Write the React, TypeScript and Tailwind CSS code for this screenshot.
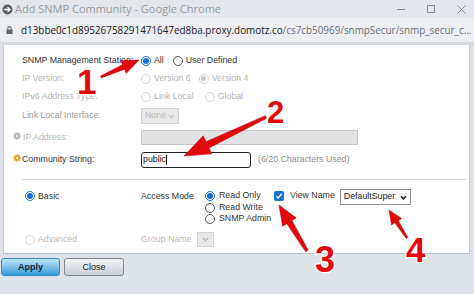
import React from 'react';

type Pt = [number, number];

function arrowPoints(tail: Pt, tip: Pt, tw: number, sw: number, hw: number, hl: number) {
  const dx = tip[0] - tail[0];
  const dy = tip[1] - tail[1];
  const len = Math.hypot(dx, dy);
  const ux = dx / len;
  const uy = dy / len;
  const nx = -uy;
  const ny = ux;
  const neck: Pt = [tip[0] - ux * hl, tip[1] - uy * hl];
  const p = (b: Pt, w: number, s: number) => `${b[0] + nx * w * s},${b[1] + ny * w * s}`;
  return [
    p(tail, tw / 2, 1),
    p(neck, sw / 2, 1),
    p(neck, hw / 2, 1),
    `${tip[0]},${tip[1]}`,
    p(neck, hw / 2, -1),
    p(neck, sw / 2, -1),
    p(tail, tw / 2, -1),
  ].join(' ');
}

function Radio({ checked = false, disabled = false }: { checked?: boolean; disabled?: boolean }) {
  if (checked && !disabled) {
    return (
      <span className="inline-flex w-[10px] h-[10px] rounded-full border border-[#1a6fd6] bg-white items-center justify-center shrink-0">
        <span className="w-[6px] h-[6px] rounded-full bg-[#1a6fd6]" />
      </span>
    );
  }
  if (checked && disabled) {
    return (
      <span className="inline-flex w-[10px] h-[10px] rounded-full border border-[#d0d0d0] bg-white items-center justify-center shrink-0">
        <span className="w-[5px] h-[5px] rounded-full bg-[#c4c4c4]" />
      </span>
    );
  }
  return (
    <span
      className={
        disabled
          ? 'inline-block w-[10px] h-[10px] rounded-full border border-[#d6d6d6] bg-white shrink-0'
          : 'inline-block w-[10px] h-[10px] rounded-full border border-[#555] bg-white shrink-0'
      }
    />
  );
}

function Gear({ color }: { color: string }) {
  return (
    <svg width="8" height="8" viewBox="0 0 16 16" className="absolute left-[-9px] top-[1px]">
      <g fill={color}>
        <circle cx="8" cy="8" r="5" />
        <rect x="6.5" y="0.5" width="3" height="15" />
        <rect x="0.5" y="6.5" width="15" height="3" />
        <rect x="6.5" y="0.5" width="3" height="15" transform="rotate(45 8 8)" />
        <rect x="6.5" y="0.5" width="3" height="15" transform="rotate(-45 8 8)" />
      </g>
      <circle cx="8" cy="8" r="2.2" fill="#fff" />
    </svg>
  );
}

function Chevron({ color = '#999', w = 1.2 }: { color?: string; w?: number }) {
  return (
    <svg width="7" height="5" viewBox="0 0 8 5">
      <path d="M1 1 L4 4 L7 1" fill="none" stroke={color} strokeWidth={w} />
    </svg>
  );
}

export default function App() {
  const label = 'w-[119px] shrink-0';
  return (
    <div
      className="relative w-[474px] h-[294px] overflow-hidden bg-[#dde3e9] text-[8.8px] text-[#333]"
      style={{ fontFamily: '"Liberation Sans", Arial, sans-serif' }}
    >
      {/* title bar */}
      <div
        className="h-[18px] bg-[#e3e6ea] flex items-center pl-[2px] pr-[8px] text-[11px] text-[#989ca2]"
        style={{ fontFamily: '"Open Sans", "Noto Sans", sans-serif' }}
      >
        <svg width="11" height="11" viewBox="0 0 12 12" className="mr-[2px]">
          <circle cx="6" cy="6" r="5.5" fill="#5f6368" />
          <path d="M2.5 6 H8.5 M6 3.5 L8.8 6 L6 8.5" stroke="#fff" strokeWidth="1.4" fill="none" />
        </svg>
        <span>Add SNMP Community - Google Chrome</span>
        <div className="ml-auto flex items-center gap-[22px]">
          <span className="block w-[8px] h-px bg-[#8a8f96]" />
          <span className="block w-[8px] h-[8px] border border-[#8a8f96]" />
          <svg width="9" height="9" viewBox="0 0 9 9">
            <path d="M0.5 0.5 L8.5 8.5 M8.5 0.5 L0.5 8.5" stroke="#8a8f96" strokeWidth="1" />
          </svg>
        </div>
      </div>
      {/* address bar */}
      <div
        className="h-[27px] bg-[#eceef1] flex items-center pl-[6px] text-[9.9px] border-b-[3px] border-[#d5d9de]"
        style={{ fontFamily: '"Open Sans", "Noto Sans", sans-serif' }}
      >
        <svg width="7" height="8" viewBox="0 0 7 8" className="mr-[8px]">
          <rect x="0.5" y="3.5" width="6" height="4.5" fill="#5f6368" />
          <path d="M1.8 3.6 V2.3 a1.7 1.7 0 0 1 3.4 0 V3.6" fill="none" stroke="#5f6368" strokeWidth="1.1" />
        </svg>
        <span className="text-[#202124] whitespace-nowrap">d13bbe0c1d89526758291471647ed8ba.proxy.domotz.co</span>
        <span className="text-[#6b6f75] whitespace-nowrap">/cs7cb50969/snmpSecur/snmp_secur_c...</span>
      </div>

      {/* dialog panel */}
      <div className="ml-[3px] mr-[4px] h-[209px] bg-white border-l border-r border-[#c3c8cd] border-b border-b-[#b9bec4]">
        <div className="pl-[18px] pt-[7px]">
          <div className="h-[18px] flex items-center">
            <span className={label}>SNMP Management Station:</span>
            <Radio checked />
            <span className="ml-[3px] mr-[9px]">All</span>
            <Radio />
            <span className="ml-[3px]">User Defined</span>
          </div>
          <div className="h-[17px] flex items-center text-[#b3b3b3]">
            <span className={label}>IP Version:</span>
            <Radio disabled />
            <span className="ml-[3px] mr-[8px]">Version 6</span>
            <Radio checked disabled />
            <span className="ml-[3px]">Version 4</span>
          </div>
          <div className="h-[19px] flex items-center text-[#b3b3b3]">
            <span className={label}>IPv6 Address Type:</span>
            <Radio disabled />
            <span className="ml-[3px] mr-[11px]">Link Local</span>
            <Radio disabled />
            <span className="ml-[3px]">Global</span>
          </div>
          <div className="h-[20px] flex items-center text-[#b3b3b3]">
            <span className="w-[119px] shrink-0 text-[#999]">Link Local Interface:</span>
            <span className="h-[16px] w-[38px] bg-[#e9e9e9] border border-[#d2d2d2] flex items-center justify-between pl-[3px] pr-[3px] text-[#bbb]">
              None <Chevron color="#bbb" />
            </span>
          </div>
          <div className="h-[23px] flex items-center">
            <span className="w-[119px] shrink-0 relative pl-[1px] text-[#b8b8b8]">
              <Gear color="#b5b5b5" />
              IP Address:
            </span>
            <span className="h-[15px] w-[217px] bg-[#e2e2e2] border border-[#c6c6c6]" />
          </div>
          <div className="h-[22px] flex items-center">
            <span className="w-[119px] shrink-0 relative">
              <Gear color="#f0a020" />
              Community String:
            </span>
            <span className="h-[16px] w-[110px] border-[1.5px] border-[#222] rounded-[3px] flex items-center pl-[1px] text-[#111]">
              public<span className="inline-block w-px h-[10px] bg-[#111]" />
            </span>
            <span className="ml-[7px] text-[#8c8c8c]">(6/20 Characters Used)</span>
          </div>
        </div>
        <div className="mt-[8px] ml-[18px] mr-[3px] border-t border-[#d4d8dc]" />
        <div className="pl-[21px] pt-[11px] flex">
          <div className="w-[116px] shrink-0 flex items-start">
            <span className="h-[10px] flex items-center"><Radio checked /></span>
            <span className="ml-[3px] leading-[10px]">Basic</span>
          </div>
          <span className="w-[64px] shrink-0 leading-[10px]">Access Mode</span>
          <div className="flex flex-col gap-[1.5px] w-[69px] shrink-0">
            <div className="flex items-center h-[10px]"><Radio checked /><span className="ml-[4px]">Read Only</span></div>
            <div className="flex items-center h-[10px]"><Radio /><span className="ml-[4px]">Read Write</span></div>
            <div className="flex items-center h-[10px]"><Radio /><span className="ml-[4px]">SNMP Admin</span></div>
          </div>
          <div className="flex items-start">
            <span className="w-[10px] h-[10px] rounded-[2px] bg-[#1a6fd6] flex items-center justify-center">
              <svg width="8" height="8" viewBox="0 0 8 8">
                <path d="M1.3 4.2 L3.2 6 L6.8 1.8" fill="none" stroke="#fff" strokeWidth="1.4" />
              </svg>
            </span>
            <span className="ml-[6px] leading-[9px]">View Name</span>
            <span className="ml-[5px] -mt-[2px] h-[16px] w-[71px] border border-[#8d8d8d] flex items-center justify-between pl-[3px] pr-[3px] text-[#222]">
              DefaultSuper <Chevron color="#222" w={1.8} />
            </span>
          </div>
        </div>
        <div className="pl-[21px] pt-[8px] flex items-center text-[#b8b8b8]">
          <div className="w-[116px] shrink-0 flex items-center">
            <Radio disabled />
            <span className="ml-[3px]">Advanced</span>
          </div>
          <span className="w-[56px] shrink-0">Group Name</span>
          <span className="h-[15px] w-[17px] bg-[#e8e8e8] border border-[#d4d4d4] flex items-center justify-center">
            <Chevron color="#aaa" />
          </span>
        </div>
      </div>

      {/* buttons */}
      <div className="flex gap-[4px] mt-[4px] ml-[1px]">
        <button className="h-[18px] w-[59px] rounded-[3px] border border-[#3d8cc0] bg-gradient-to-b from-[#bfe6fb] to-[#2c9bd9] text-[9px] font-bold text-[#123] leading-none">
          Apply
        </button>
        <button className="h-[18px] w-[60px] rounded-[3px] border border-[#7f8790] bg-gradient-to-b from-[#f4f5f6] to-[#c9ced4] text-[9px] text-[#222] leading-none">
          Close
        </button>
      </div>

      {/* annotations */}
      <svg className="absolute left-0 top-0 pointer-events-none" width="474" height="294" viewBox="0 0 474 294">
        <g fill="#e3080c" stroke="#b00000" strokeWidth="0.5">
          <polygon points={arrowPoints([101, 77], [139, 60], 2, 5, 14, 17)} />
          <polygon points={arrowPoints([266, 117], [184, 156], 3, 7, 20, 26)} />
          <polygon points={arrowPoints([307, 251], [279, 205], 3, 6, 16, 20)} />
          <polygon points={arrowPoints([407, 238], [389, 210], 2, 4, 12, 14)} />
        </g>
        <g
          fill="#e3080c"
          stroke="#fff"
          strokeWidth="2.5"
          style={{ paintOrder: 'stroke', fontFamily: '"Liberation Sans", Arial, sans-serif', fontWeight: 700 }}
        >
          <text x="77" y="94" fontSize="35">1</text>
          <text x="267" y="123" fontSize="31">2</text>
          <text x="315" y="272" fontSize="36">3</text>
          <text x="406" y="262" fontSize="35">4</text>
        </g>
      </svg>
    </div>
  );
}
